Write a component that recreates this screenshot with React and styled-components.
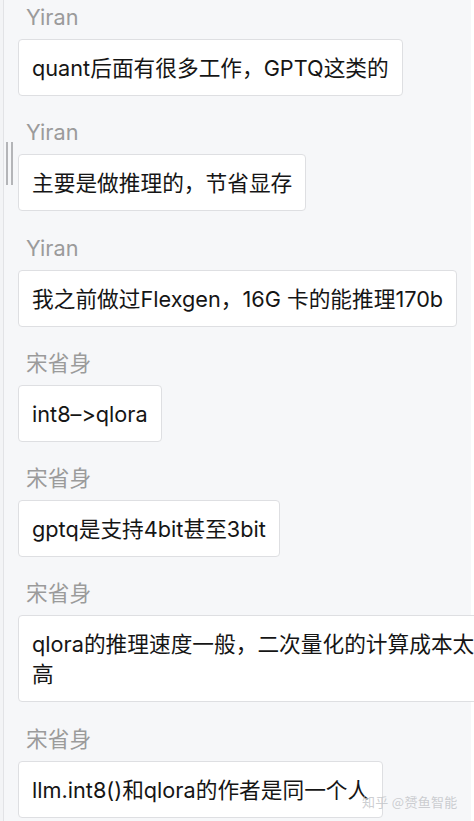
import React from "react";
import styled, { createGlobalStyle } from "styled-components";

const GlobalStyle = createGlobalStyle`
  html, body {
    margin: 0;
    padding: 0;
    background: #ffffff;
    overflow: hidden;
  }
`;

const Page = styled.div`
  position: relative;
  display: flex;
  width: 474px;
  height: 821px;
  overflow: hidden;
  font-family: Inter, "Noto Sans CJK SC", sans-serif;
  font-variant-ligatures: none;
  font-feature-settings: "calt" 0, "liga" 0;
`;

const Rail = styled.div`
  flex: 0 0 3px;
  background: #f3f4f6;
  border-right: 1px solid #e2e3e6;
`;

const Handle = styled.div`
  position: absolute;
  left: 6px;
  top: 142px;
  display: flex;
  gap: 3px;
`;

const HandleBar = styled.span`
  width: 2px;
  height: 43px;
  background: #b4b5b8;
`;

const Feed = styled.div`
  flex: 1;
  display: flex;
  flex-direction: column;
  align-items: flex-start;
  gap: 23.3px;
  padding: 4px 0 0 14px;
  background: #f6f7f9;
  border-right: 3px solid #ffffff;
  min-width: 0;
`;

const Message = styled.div`
  display: flex;
  flex-direction: column;
  align-items: flex-start;
`;

const Sender = styled.div`
  padding-left: 8px;
  margin-bottom: 9px;
  font-size: 21.7px;
  line-height: 26px;
  color: #9b9b9b;
  white-space: nowrap;
`;

const Bubble = styled.div`
  box-sizing: border-box;
  width: max-content;
  max-width: 478px;
  padding: 13px 13px 12px 13px;
  background: #ffffff;
  border: 1px solid #dedfe2;
  border-radius: 4px;
  font-size: 21.7px;
  line-height: 30px;
  color: #151515;
  flex-shrink: 0;
`;

const Watermark = styled.div`
  position: absolute;
  left: 362px;
  top: 793px;
  font-family: "Noto Sans CJK SC", sans-serif;
  font-size: 13px;
  line-height: 18px;
  letter-spacing: 0.3px;
  color: rgba(192, 194, 198, 0.8);
  white-space: nowrap;
`;

const messages = [
  { from: "Yiran", text: "quant后面有很多工作，GPTQ这类的" },
  { from: "Yiran", text: "主要是做推理的，节省显存" },
  { from: "Yiran", text: "我之前做过Flexgen，16G 卡的能推理170b" },
  { from: "宋省身", text: "int8–>qlora" },
  { from: "宋省身", text: "gptq是支持4bit甚至3bit" },
  { from: "宋省身", text: "qlora的推理速度一般，二次量化的计算成本太高" },
  { from: "宋省身", text: "llm.int8()和qlora的作者是同一个人" },
];

export default function App() {
  return (
    <>
      <GlobalStyle />
      <Page>
        <Rail />
        <Feed>
          {messages.map((m, i) => (
            <Message key={i}>
              <Sender>{m.from}</Sender>
              <Bubble>{m.text}</Bubble>
            </Message>
          ))}
        </Feed>
        <Handle>
          <HandleBar />
          <HandleBar />
        </Handle>
        <Watermark>知乎 @赟鱼智能</Watermark>
      </Page>
    </>
  );
}
